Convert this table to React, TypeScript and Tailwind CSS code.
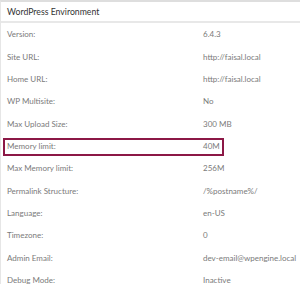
const rows: [string, string][] = [
  ["Version:", "6.4.3"],
  ["Site URL:", "http://faisal.local"],
  ["Home URL:", "http://faisal.local"],
  ["WP Multisite:", "No"],
  ["Max Upload Size:", "300 MB"],
  ["Memory limit:", "40M"],
  ["Max Memory limit:", "256M"],
  ["Permalink Structure:", "/%postname%/"],
  ["Language:", "en-US"],
  ["Timezone:", "0"],
  ["Admin Email:", "dev-email@wpengine.local"],
  ["Debug Mode:", "Inactive"],
];

export default function App() {
  return (
    <div
      className="w-[300px] h-[284px] overflow-hidden bg-white border-t-2 border-l border-t-[#dedede] border-l-[#e6e6e6]"
      style={{ fontFamily: 'Lato, "Noto Sans", sans-serif' }}
    >
      <div className="h-[21px] flex items-center pl-[6px] border-b-2 border-[#e8e8e8] text-[8.7px] text-[#333] whitespace-nowrap">
        WordPress Environment
      </div>
      <div>
        {rows.map(([label, value]) => {
          const hl = label === "Memory limit:";
          return (
            <div key={label} className="relative h-[22.36px] flex items-center text-[8px] text-[#7a7a7a] whitespace-nowrap">
              {hl && (
                <div className="absolute left-[2px] top-[3px] w-[221px] h-[18px] border-2 border-[#8c1846]" />
              )}
              <div className="w-[202px] shrink-0 pl-[6px]">{label}</div>
              <div>{value}</div>
            </div>
          );
        })}
      </div>
    </div>
  );
}
